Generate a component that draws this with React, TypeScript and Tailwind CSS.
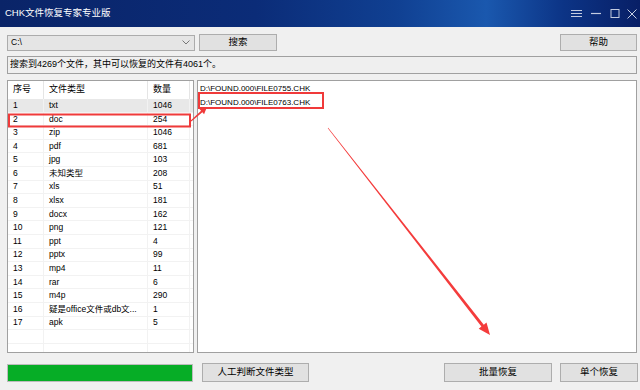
import * as React from "react";

const rows: [string, string, string][] = [
  ["1", "txt", "1046"],
  ["2", "doc", "254"],
  ["3", "zip", "1046"],
  ["4", "pdf", "681"],
  ["5", "jpg", "103"],
  ["6", "未知类型", "208"],
  ["7", "xls", "51"],
  ["8", "xlsx", "181"],
  ["9", "docx", "162"],
  ["10", "png", "121"],
  ["11", "ppt", "4"],
  ["12", "pptx", "99"],
  ["13", "mp4", "11"],
  ["14", "rar", "6"],
  ["15", "m4p", "290"],
  ["16", "疑是office文件或db文...", "1"],
  ["17", "apk", "5"],
  ["", "", ""],
  ["", "", ""],
];

const files = ["D:\\FOUND.000\\FILE0755.CHK", "D:\\FOUND.000\\FILE0763.CHK"];

function WinButton({ label, className }: { label: string; className: string }) {
  return (
    <button className={`flex items-center justify-center border border-[#adadad] bg-[#e1e1e1] text-[9.5px] text-black ${className}`}>
      {label}
    </button>
  );
}

function TitleBar() {
  return (
    <div className="flex h-[27px] items-center justify-between bg-[linear-gradient(90deg,#0a2468_0%,#0b2c78_40%,#104092_62%,#1a58ae_76%,#0c3486_88%,#081f66_100%)] pl-[5px] pr-[3px]">
      <span className="text-[9.5px] text-white">CHK文件恢复专家专业版</span>
      <div className="flex items-center gap-[7px] text-[#c4cce0]">
        <svg width="11" height="9" viewBox="0 0 11 9" className="mr-[2px]">
          <path d="M0 1.5H11M0 4.5H11M0 7.5H11" stroke="currentColor" strokeWidth="1" />
        </svg>
        <svg width="10" height="9" viewBox="0 0 10 9">
          <path d="M0 4.5H10" stroke="currentColor" strokeWidth="1.2" />
        </svg>
        <svg width="10" height="9" viewBox="0 0 10 9" className="ml-[2px]">
          <rect x="1" y="0.5" width="8" height="8" fill="none" stroke="currentColor" strokeWidth="1" />
        </svg>
        <svg width="10" height="10" viewBox="0 0 10 10">
          <path d="M0.5 0.5L9.5 9.5M9.5 0.5L0.5 9.5" stroke="currentColor" strokeWidth="1" />
        </svg>
      </div>
    </div>
  );
}

function TypeList() {
  return (
    <div className="h-full w-[187px] shrink-0 overflow-hidden border border-[#a0a0a0] bg-white">
      <div className="flex h-[18px] items-center text-[9px]">
        <div className="flex h-full w-[36px] items-center border-r border-[#e5e5e5] pl-[5px]">序号</div>
        <div className="flex h-full w-[104px] items-center border-r border-[#e5e5e5] pl-[5px]">文件类型</div>
        <div className="flex h-full w-[42px] items-center border-r border-[#e5e5e5] pl-[5px]">数量</div>
      </div>
      {rows.map(([n, t, c], i) => (
        <div
          key={i}
          className={`flex h-[13.6px] items-center border-b border-[#f2f2f2] text-[8.5px] ${i === 0 ? "bg-[#e8e8e8]" : ""}`}
        >
          <div className="flex h-full w-[36px] items-center border-r border-[#f2f2f2] pl-[5px]">{n}</div>
          <div className="flex h-full w-[104px] items-center whitespace-nowrap border-r border-[#f2f2f2] pl-[5px]">{t}</div>
          <div className="flex h-full w-[42px] items-center border-r border-[#f2f2f2] pl-[5px]">{c}</div>
        </div>
      ))}
    </div>
  );
}

function Annotations() {
  return (
    <svg className="pointer-events-none absolute inset-0" width="640" height="390" viewBox="0 0 640 390">
      <rect x="9" y="114.5" width="181" height="12" fill="none" stroke="#f03a3a" strokeWidth="2" />
      <rect x="199" y="93" width="124" height="15" fill="none" stroke="#f03a3a" strokeWidth="2" />
      <polygon
        points="190.7,120.6 201.1,110.85 199.45,109 207,107 204.05,114.2 202.4,112.35 191.3,121.4"
        fill="#f03a3a"
      />
      <polygon
        points="327.8,128.2 481.4,326.5 478.7,328.7 490,335 486.5,322.5 483.8,324.7 328.2,127.8"
        fill="#f43c3c"
      />
    </svg>
  );
}

export default function App() {
  return (
    <div className="relative h-[390px] w-[640px] overflow-hidden bg-[#f0f0f0] font-['Liberation_Sans','Noto_Sans_CJK_SC',sans-serif] text-black">
      <TitleBar />
      <div className="flex flex-col pl-[7px] pr-[3px]">
        <div className="mt-[7px] flex h-[17px] items-center">
          <div className="flex h-[16px] w-[188px] items-center justify-between border border-[#acacac] bg-[#e5e5e5] pl-[3px] pr-[4px] text-[8.5px]">
            <span>C:\</span>
            <svg width="8" height="5" viewBox="0 0 8 5">
              <path d="M0.5 0.5L4 4L7.5 0.5" fill="none" stroke="#777" strokeWidth="1" />
            </svg>
          </div>
          <WinButton label="搜索" className="ml-[4px] h-[17px] w-[78px]" />
          <div className="flex-1" />
          <WinButton label="帮助" className="h-[17px] w-[77px]" />
        </div>
        <div className="mt-[5px] flex h-[18px] items-center border border-[#a0a0a0] bg-[#efefef] pl-[2px] text-[9px]">
          搜索到4269个文件，其中可以恢复的文件有4061个。
        </div>
        <div className="mt-[6px] flex h-[273px] gap-[3px]">
          <TypeList />
          <div className="flex flex-1 flex-col border border-[#a0a0a0] bg-white pt-[1px] text-[8px]">
            {files.map((f) => (
              <div key={f} className="flex h-[14px] items-center pl-[2px]">
                {f}
              </div>
            ))}
          </div>
        </div>
        <div className="mt-[10px] flex h-[19px] items-center">
          <div className="h-[18px] w-[186px] border border-[#bcbcbc] bg-[#06ad26]" />
          <WinButton label="人工判断文件类型" className="ml-[9px] h-[19px] w-[107px]" />
          <div className="flex-1" />
          <WinButton label="批量恢复" className="h-[19px] w-[108px]" />
          <WinButton label="单个恢复" className="-mr-[1px] ml-[8px] h-[19px] w-[78px]" />
        </div>
      </div>
      <Annotations />
    </div>
  );
}
